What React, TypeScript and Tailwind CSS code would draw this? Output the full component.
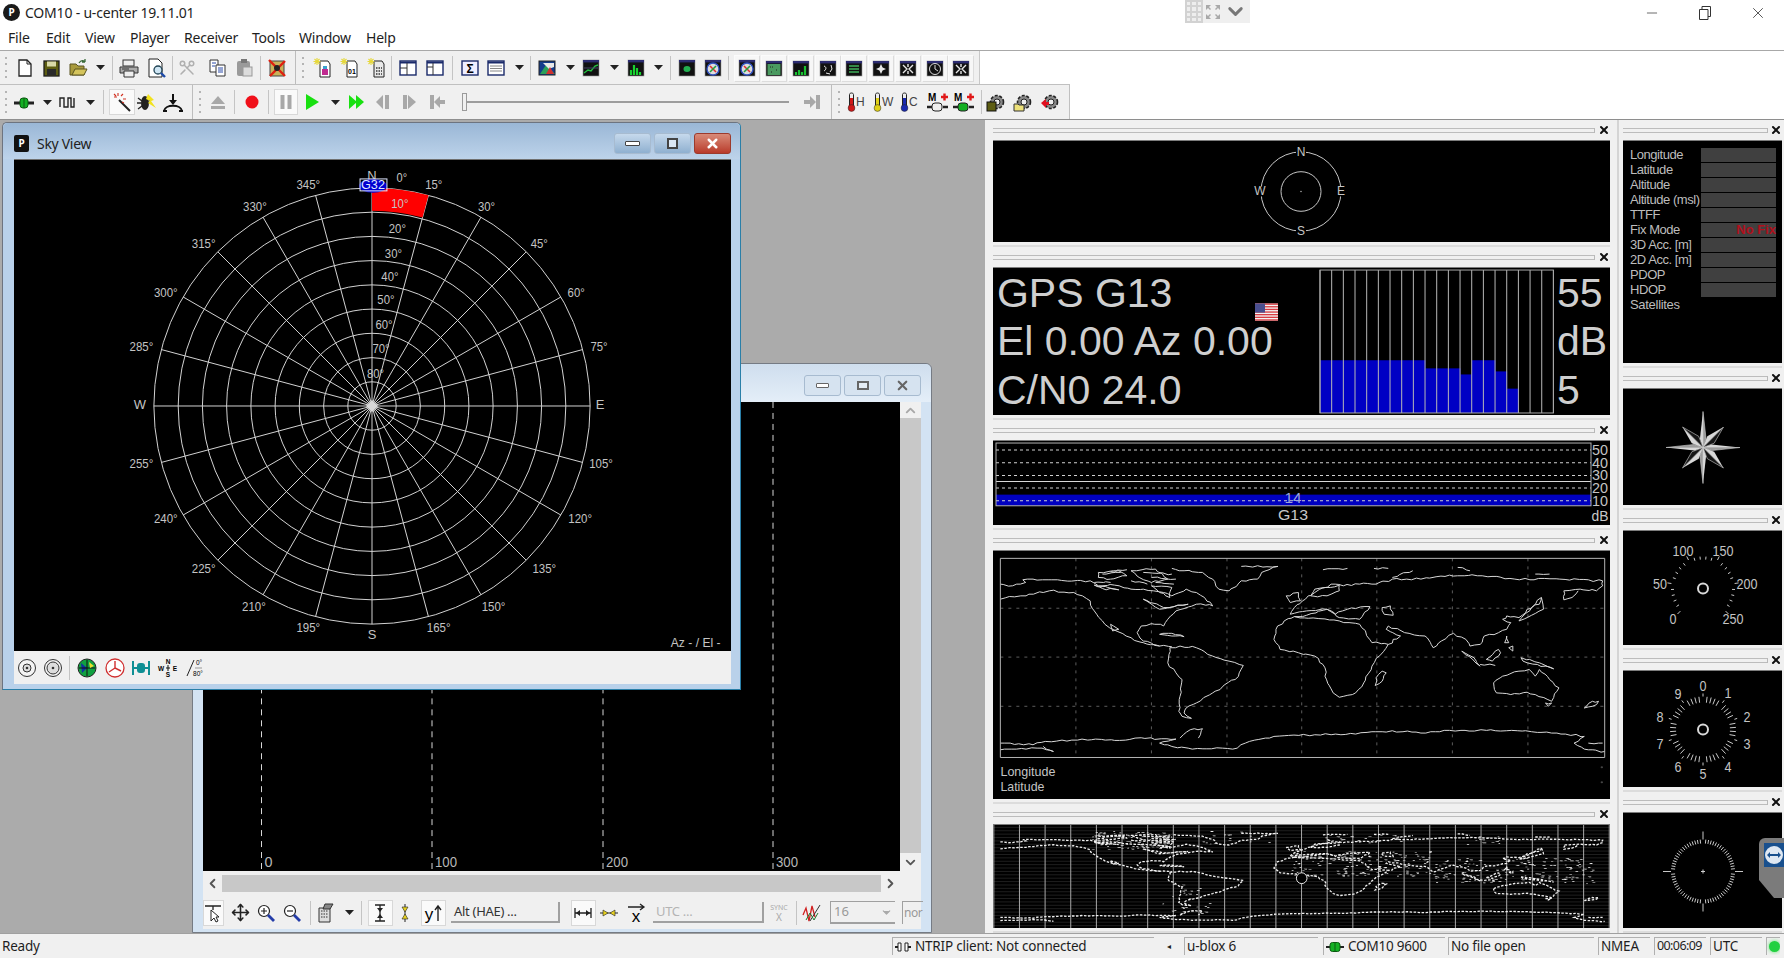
import React from 'react';
import { ChevronDown, ChevronLeft, ChevronRight, ChevronUp, Minus, Move, Scissors, X } from 'lucide-react';

const FONT = 'Liberation Sans, Arial, sans-serif';

// ---------- small helpers ----------
const polar = (cx: number, cy: number, r: number, deg: number) => {
    const a = (deg * Math.PI) / 180;
    return [cx + r * Math.sin(a), cy - r * Math.cos(a)];
};

const ticks = (cx: number, cy: number, n: number, r1: number, r2: number, every: number, r3: number, start = 0, sweep = 360) => {
    let d = '';
    const steps = sweep === 360 ? n : n + 1;
    for (let i = 0; i < steps; i++) {
        const deg = start + (sweep * i) / n;
        const [x1, y1] = polar(cx, cy, i % every === 0 ? r3 : r1, deg);
        const [x2, y2] = polar(cx, cy, r2, deg);
        d += `M${x1.toFixed(1)} ${y1.toFixed(1)}L${x2.toFixed(1)} ${y2.toFixed(1)}`;
    }
    return d;
};

let seed = 1234;
const rnd = () => {
    seed = (seed * 16807) % 2147483647;
    return seed / 2147483647;
};
const specks = (n: number, x0: number, y0: number, x1: number, y1: number) => {
    let d = '';
    for (let i = 0; i < n; i++) {
        const x = x0 + rnd() * (x1 - x0);
        const y = y0 + rnd() * (y1 - y0);
        d += `M${x.toFixed(0)} ${y.toFixed(0)}h${(3 + rnd() * 7).toFixed(0)}v2h-5z`;
    }
    return d;
};

// breaks a straight traced coast into short jittered steps, like the low-res map in the app
const rough = (d: string, amp = 3) => {
    let out = '';
    let px = 0;
    let py = 0;
    let sx = 0;
    let sy = 0;
    const walk = (x: number, y: number) => {
        const n = Math.max(1, Math.ceil(Math.hypot(x - px, y - py) / 13));
        for (let i = 1; i < n; i++) {
            const t = i / n;
            out += `L${(px + (x - px) * t + (rnd() - 0.5) * amp * 2).toFixed(0)} ${(py + (y - py) * t + (rnd() - 0.5) * amp * 2).toFixed(0)}`;
        }
        out += `L${x} ${y}`;
        px = x;
        py = y;
    };
    for (const m of d.matchAll(/([MLZ])([^MLZ]*)/g)) {
        const [x, y] = m[2].trim().split(/\s+/).map(Number);
        if (m[1] === 'M') {
            out += `M${x} ${y}`;
            px = sx = x;
            py = sy = y;
        } else if (m[1] === 'L') {
            walk(x, y);
        } else {
            walk(sx, sy);
        }
    }
    return out;
};

const Label = ({ x, y, children, size = 13, fill = '#c4c4c4', anchor = 'middle', len }: { x: number; y: number; children: React.ReactNode; size?: number; fill?: string; anchor?: 'middle' | 'start' | 'end'; len?: number }) => (
    <text x={x} y={y} fontSize={size} fill={fill} textAnchor={anchor} dominantBaseline="central" fontFamily={FONT} textLength={len} lengthAdjust={len ? 'spacingAndGlyphs' : undefined}>
        {children}
    </text>
);

// ---------- toolbar icons ----------
const Ic = ({ children, w = 20, h = 20 }: { children: React.ReactNode; w?: number; h?: number }) => (
    <svg width={w} height={h} viewBox={`0 0 ${w} ${h}`} className="block flex-none overflow-visible">
        {children}
    </svg>
);

const NewDoc = () => <Ic><path d="M4 2h8l4 4v12H4z" fill="#fff" stroke="#222" strokeWidth="1.3" /><path d="M12 2v4h4" fill="none" stroke="#222" /></Ic>;
const Save = () => <Ic><rect x="3" y="3" width="15" height="15" fill="#5d5d12" stroke="#1d1d1d" strokeWidth="1.3" /><rect x="6" y="3.5" width="9" height="5" fill="#d9d9a8" /><rect x="6" y="11" width="9" height="6.5" fill="#2a2a2a" /></Ic>;
const OpenFolder = () => <Ic><path d="M2 6h6l2 2h6v9H2z" fill="#a89a3c" stroke="#5a5520" /><path d="M4 17l3-6h12l-3 6z" fill="#d4c45c" stroke="#5a5520" /><path d="M11 5c2-3 5-3 6-1m0 0v-3m0 3h-3" fill="none" stroke="#3a6a3a" strokeWidth="1.3" /></Ic>;
const Printer = () => <Ic w={22}><rect x="5" y="2" width="11" height="6" fill="#eee" stroke="#333" /><path d="M2 9h18v6H2z" fill="#aaa" stroke="#333" /><path d="M6 13h10v6H6z" fill="#eee" stroke="#333" /><path d="M4 11h7" stroke="#333" /></Ic>;
const Preview = () => <Ic><path d="M3 1h9l4 4v14H3z" fill="#fff" stroke="#222" /><circle cx="12" cy="12" r="4" fill="#cfe6f4" stroke="#245" strokeWidth="1.3" /><path d="M15 15l4 4" stroke="#1c4aa8" strokeWidth="2.4" /></Ic>;
const Copy = () => <Ic><path d="M3 2h8v12H3z" fill="#fff" stroke="#333" /><path d="M9 7h9v11H9z" fill="#fff" stroke="#333" /><path d="M5 5h4M5 8h3M11 10h5M11 12h5M11 14h5" stroke="#2a4aa8" /></Ic>;
const Paste = () => <Ic><rect x="3" y="3" width="13" height="15" rx="2" fill="#9a9a9a" /><rect x="7" y="1" width="6" height="4" fill="#777" /><rect x="9" y="9" width="9" height="9" fill="#dcdcdc" stroke="#999" /></Ic>;
const Delete = () => <Ic><path d="M3 3h14v15H3z" fill="#c8b25a" stroke="#444" /><path d="M2 2l16 16M18 3L3 18" stroke="#e02010" strokeWidth="2.4" /><circle cx="10" cy="10" r="3" fill="#222" /></Ic>;
const SparkDoc = ({ kind }: { kind: number }) => (
    <Ic>
        <path d="M7 3h8l2 3v13H7z" fill={kind === 2 ? '#e8e8e8' : '#fff'} stroke="#222" />
        <path d="M4 0v7M0.5 3.5h7M1.5 1l5 5M6.5 1l-5 5" stroke="#e6d83c" strokeWidth="1.1" />
        {kind === 0 && <><rect x="9" y="11" width="6" height="6" fill="#c02a90" /><rect x="10" y="8" width="4" height="3" fill="#3aa0d0" /></>}
        {kind === 1 && <text x="12" y="15.5" fontSize="7" fontWeight="700" textAnchor="middle" fontFamily={FONT}>01</text>}
        {kind === 2 && <path d="M9 10h6M9 13h6M9 16h6" stroke="#333" strokeDasharray="1.5 1" strokeWidth="1.4" />}
    </Ic>
);
const Layout = ({ right }: { right?: boolean }) => <Ic><rect x="2" y="3" width="16" height="14" fill="#fff" stroke="#1a2a6a" strokeWidth="1.4" /><path d="M2 4.5h16" stroke="#1a2a6a" strokeWidth="2" /><path d={right ? 'M8 5v12M2 9h6' : 'M9 5v12M2 10h7'} stroke="#333" /></Ic>;
const SigmaIcon = () => <Ic><rect x="2" y="3" width="16" height="14" fill="#eef" stroke="#1a2a6a" strokeWidth="1.4" /><text x="10" y="14.5" fontSize="12" fontWeight="700" textAnchor="middle" fontFamily={FONT}>Σ</text></Ic>;
const TableIcon = () => <Ic><rect x="2" y="3" width="16" height="14" fill="#fff" stroke="#1a2a6a" strokeWidth="1.4" /><path d="M2 4.5h16" stroke="#1a2a6a" strokeWidth="2" /><path d="M4 8h12M4 10.5h12M4 13h12" stroke="#888" /></Ic>;
const Multi = () => <Ic><rect x="2" y="3" width="16" height="14" fill="#143c8c" stroke="#222" /><path d="M3 16l6-9 9 9z" fill="#2aa05a" /><path d="M6 5l6 6 5-2v-4z" fill="#e8e8e8" /><path d="M9 16l4-7 4 7z" fill="#d03030" /></Ic>;

const Win = ({ children, bare }: { children?: React.ReactNode; bare?: boolean }) => (
    <Ic>
        <rect x="2" y={bare ? 3 : 2} width="16" height={bare ? 15 : 16} fill="#111" stroke="#9a9a9a" strokeWidth="0.6" />
        <rect x="2" y={bare ? 3 : 2} width="16" height="2.4" fill="#2c2c70" />
        {children}
    </Ic>
);
const WinLine = () => <Win><path d="M3 15l4-3 3 1 4-5 3-1" fill="none" stroke="#22c040" strokeWidth="1.4" /><path d="M3 10h14" stroke="#446" /></Win>;
const WinBars = () => <Win><path d="M5 17v-5M8 17V7M11 17v-7M14 17v-3" stroke="#19d030" strokeWidth="2.2" /></Win>;
const WinBlob = () => <Win><ellipse cx="10" cy="11" rx="3.5" ry="3" fill="#22b050" /></Win>;
const WinSky = () => <Win><circle cx="10" cy="11" r="6" fill="#ddd" stroke="#3050c0" strokeWidth="1.4" /><path d="M7 8l6 6" stroke="#e03030" strokeWidth="1.6" /><path d="M13 8l-6 6" stroke="#20a040" strokeWidth="1.6" /></Win>;
const WinMap = () => <Win bare><rect x="3.5" y="6" width="13" height="11" fill="#4a9a60" /><path d="M6 9h3M12 12h2M7 14h2" stroke="#222" strokeDasharray="1 1" /></Win>;
const WinSig = () => <Win bare><path d="M5 17v-3M8 17v-5M11 17v-3M14 17V8" stroke="#18c030" strokeWidth="2.2" /></Win>;
const WinText = () => <Win bare><path d="M5 8h10M5 11h10M5 14h10" stroke="#3fae5a" strokeWidth="1.6" /></Win>;
const WinCompass = () => <Win bare><path d="M10 6l1.6 3.4L15 11l-3.4 1.6L10 16l-1.6-3.4L5 11l3.4-1.6z" fill="#e8e8e8" /></Win>;
const WinCross = () => <Win bare><path d="M5 7l4 4-4 4M15 7l-4 4 4 4M10 6v3M10 13v3" fill="none" stroke="#e8e8e8" strokeWidth="1.4" /></Win>;
const WinClock = () => <Win bare><circle cx="10" cy="11" r="5.5" fill="none" stroke="#ddd" /><path d="M10 11V7M10 11l3 2" stroke="#ddd" /></Win>;
const WinWorld = () => <Win bare><path d="M6 8c3 1 2 4 0 5M13 7l1 4-2 3M8 15l4 1" fill="none" stroke="#eee" /></Win>;

const Drop = () => <svg width="9" height="5" viewBox="0 0 9 5" className="block flex-none"><path d="M0 0h9L4.5 5z" fill="#222" /></svg>;
const Connector = ({ fill = '#14b024' }: { fill?: string }) => <Ic w={22}><path d="M1 11h6M15 11h6" stroke="#222" strokeWidth="3" /><rect x="7" y="6" width="8" height="10" rx="3" fill={fill} stroke="#0a5a10" /><path d="M11 6v10" stroke="#0a5a10" /></Ic>;
const Pulse = () => <Ic w={18}><path d="M1 15V6h4v9h4V6h3v9h3V6" fill="none" stroke="#222" strokeWidth="1.4" /></Ic>;
const Wand = () => <Ic><path d="M7 8l11 11" stroke="#222" strokeWidth="2" /><path d="M6 1v3M2 5h3M9 4l2-2M2 2l2 2M11 7h3M12 11l-2-1" stroke="#d03020" strokeWidth="1.1" /></Ic>;
const Bug = () => <Ic w={22}><ellipse cx="9" cy="11" rx="4" ry="7" fill="#222" /><path d="M2 6l4 3M1 11h4M2 17l4-3M16 7l-3 2" stroke="#222" strokeWidth="1.3" /><path d="M12 2l6 6-3 1 5 7-8-5 2-2-4-2z" fill="#f2e21e" /></Ic>;
const Dish = () => <Ic w={22}><path d="M2 19c1-7 17-7 18 0" fill="none" stroke="#111" strokeWidth="2" /><path d="M1 19h4M17 19h4" stroke="#111" strokeWidth="2" /><path d="M11 2v9" stroke="#111" strokeWidth="2" /><path d="M7 8l4 5 4-5z" fill="#111" /></Ic>;
const Eject = () => <Ic><path d="M10 4l7 8H3z" fill="#a8a8a8" /><rect x="3" y="14" width="14" height="3" fill="#a8a8a8" /></Ic>;
const Record = () => <Ic><circle cx="10" cy="10" r="6.5" fill="#f0101a" /></Ic>;
const Pause = () => <Ic><rect x="4.5" y="3" width="4" height="14" fill="#a8a8a8" /><rect x="11.5" y="3" width="4" height="14" fill="#a8a8a8" /></Ic>;
const Play = () => <Ic><path d="M4 2l13 8-13 8z" fill="#18e010" /></Ic>;
const Fast = () => <Ic><path d="M3 3l8 7-8 7z" fill="#18e010" /><path d="M10 3l8 7-8 7z" fill="#18e010" /></Ic>;
const Prev = () => <Ic><path d="M10 3v14L3 10z" fill="#a8a8a8" /><rect x="12" y="3" width="4" height="14" fill="#a8a8a8" /></Ic>;
const Next = () => <Ic><path d="M9 3v14l8-7z" fill="#a8a8a8" /><rect x="4" y="3" width="4" height="14" fill="#a8a8a8" /></Ic>;
const SkipStart = () => <Ic><rect x="3" y="3" width="4" height="14" fill="#a8a8a8" /><path d="M13 4v12l-6-6z" fill="#a8a8a8" /><rect x="12" y="8" width="6" height="4" fill="#a8a8a8" /></Ic>;
const SkipEnd = () => <Ic><rect x="14" y="3" width="4" height="14" fill="#a8a8a8" /><path d="M8 4v12l6-6z" fill="#a8a8a8" /><rect x="2" y="8" width="7" height="4" fill="#a8a8a8" /></Ic>;
const Thermo = ({ color, letter }: { color: string; letter: string }) => (
    <Ic w={24}>
        <path d="M2.500 2.500c0-2 4-2 4 0V14h-4z" fill="#eee" stroke="#222" />
        <rect x="3" y="6" width="3" height="9" fill={color} />
        <circle cx="4.500" cy="16" r="3.400" fill={color} stroke="#222" strokeWidth=".5" />
        <text x="9" y="14" fontSize="12" fill="#444" fontFamily={FONT}>{letter}</text>
    </Ic>
);
const MPlus = ({ live }: { live?: boolean }) => (
    <Ic w={24}>
        <text x="2" y="9" fontSize="10" fontWeight="700" fontFamily={FONT}>M</text>
        <path d="M15 5h7M18.500 1.500v7" stroke="#e01818" strokeWidth="2.4" />
        <path d="M1 15h5M17 15h5" stroke="#222" strokeWidth="2.500" />
        <rect x="6" y="11" width="10" height="8" rx="3" fill={live ? '#14b024' : '#eee'} stroke="#222" />
    </Ic>
);
const Gear = ({ badge }: { badge: 'save' | 'open' | 'back' }) => (
    <Ic w={22}>
        <circle cx="11" cy="10" r="6.500" fill="#888" stroke="#222" strokeWidth="1.600" strokeDasharray="3 1.600" />
        <circle cx="11" cy="10" r="3" fill="#eee" stroke="#222" />
        {badge === 'save' && <rect x="1" y="10" width="9" height="9" fill="#5d5d12" stroke="#111" />}
        {badge === 'open' && <path d="M1 12h4l1 1h5v6H1z" fill="#eee27a" stroke="#333" />}
        {badge === 'back' && <path d="M1 11l5-4v3h3v3H6v3z" fill="#e01020" />}
    </Ic>
);

const Dial = ({ alt }: { alt?: boolean }) => <Ic><circle cx="10" cy="10" r="8.500" fill="#f4f4f4" stroke="#333" /><circle cx="10" cy="10" r={alt ? 6 : 4} fill="#ddd" stroke="#333" /><circle cx="10" cy="10" r="1.300" fill="#333" /></Ic>;
const Globe = () => <Ic><circle cx="10" cy="10" r="9" fill="#10a040" stroke="#222" /><path d="M4 5l6 5-5 5z" fill="#1030a0" /><path d="M2 10h16M10 2v16" stroke="#111" /><path d="M12 4l5 4-4 2z" fill="#e8e030" /></Ic>;
const RedDial = () => <Ic><circle cx="10" cy="10" r="9" fill="#fff" stroke="#d03030" strokeWidth="1.300" /><path d="M10 3v7l6 3M10 10l-6 4" fill="none" stroke="#d03030" strokeWidth="1.400" /></Ic>;
const TealIc = () => <Ic><rect x="6" y="5" width="8" height="10" rx="3" fill="#0f8f94" /><path d="M2 3v14M18 3v14M2 10h16" stroke="#0f8f94" strokeWidth="2" /></Ic>;
const Nsew = () => (
    <Ic>
        <text x="10" y="6" fontSize="6.500" fontWeight="700" textAnchor="middle" fontFamily={FONT}>N</text>
        <text x="10" y="19" fontSize="6.500" fontWeight="700" textAnchor="middle" fontFamily={FONT}>S</text>
        <text x="3" y="13" fontSize="6.500" fontWeight="700" textAnchor="middle" fontFamily={FONT}>W</text>
        <text x="17" y="13" fontSize="6.500" fontWeight="700" textAnchor="middle" fontFamily={FONT}>E</text>
        <path d="M10 7v6" stroke="#111" /><path d="M8 10h4" stroke="#111" />
    </Ic>
);
const Elev = () => (
    <Ic>
        <path d="M2 18L9 2" stroke="#222" />
        <text x="14" y="7" fontSize="6.500" textAnchor="middle" fontFamily={FONT}>0°</text>
        <path d="M10 10h7" stroke="#999" />
        <text x="13" y="18" fontSize="6.500" textAnchor="middle" fontFamily={FONT}>80°</text>
    </Ic>
);

// window toolbar
const CursorLine = () => <Ic><path d="M2 3h16M10 3v4" stroke="#222" strokeWidth="1.300" /><path d="M8 7v11l3-3 2 4 2-1-2-4h3z" fill="#fff" stroke="#222" /></Ic>;
const Mag = ({ plus }: { plus?: boolean }) => <Ic><circle cx="8" cy="8" r="5.500" fill="#fff" stroke="#222" strokeWidth="1.200" /><path d={plus ? 'M5 8h6M8 5v6' : 'M5 8h6'} stroke="#222" strokeWidth="1.200" /><path d="M12 12l6 6" stroke="#243ca8" strokeWidth="2.800" /></Ic>;
const Clipboard = () => <Ic><path d="M3 5h11v14H3z" fill="#ddd" stroke="#333" /><path d="M5 8h7M5 11h7M5 14h7" stroke="#333" strokeDasharray="1.500 1" /><path d="M9 1h8l-3 5H7z" fill="#888" stroke="#333" /></Ic>;
const IBeam = () => <Ic><path d="M5 2h10M5 18h10M10 2v16" stroke="#222" strokeWidth="1.300" /><path d="M7 5h6l-3 4zM7 15h6l-3-4z" fill="#222" /></Ic>;
const Squeeze = () => <Ic><path d="M10 1v18" stroke="#222" /><path d="M7 4h6l-3 5zM7 16h6l-3-5z" fill="#e6d020" stroke="#222" strokeWidth=".6" /></Ic>;
const YUp = () => <Ic w={22}><text x="7" y="17" fontSize="17" fontFamily={FONT} textAnchor="middle">y</text><path d="M16 18V4M13 7l3-4 3 4" fill="none" stroke="#222" strokeWidth="1.400" /></Ic>;
const HSpan = () => <Ic><path d="M2 5v10M18 5v10M2 10h16" stroke="#222" strokeWidth="1.300" /><path d="M3 10l4-3v6zM17 10l-4-3v6z" fill="#222" /></Ic>;
const HSqueeze = () => <Ic><path d="M1 10h18" stroke="#222" /><path d="M4 7v6l5-3zM16 7v6l-5-3z" fill="#e6d020" stroke="#222" strokeWidth=".6" /></Ic>;
const XArrow = () => <Ic><text x="10" y="19" fontSize="17" textAnchor="middle" fontFamily={FONT}>x</text><path d="M2 4h15M14 1l4 3-4 3" fill="none" stroke="#222" strokeWidth="1.300" /></Ic>;
const Wave = () => <Ic><path d="M1 12l3-7 3 13 3-15 3 11" fill="none" stroke="#d02020" strokeWidth="1.300" /><path d="M8 18L18 2" stroke="#333" /><path d="M4 17l4-7 4 7 4-7" fill="none" stroke="#208030" /></Ic>;

// ---------- toolbar layout ----------
const T = ({ className = 'w-[26px]', children }: { className?: string; children?: React.ReactNode }) => (
    <div className={`flex h-full flex-none items-center justify-center ${className}`}>{children}</div>
);
const Sep = ({ className = 'w-[4px]' }: { className?: string }) => (
    <div className={`flex h-full flex-none items-center justify-center ${className}`}><div className="h-[24px] w-px bg-[#c4c4c4]" /></div>
);
const Grip = () => (
    <div className="flex h-[22px] w-[2px] flex-none flex-col justify-between">
        {[0, 1, 2, 3].map(i => <div key={i} className="h-[2px] w-[2px] bg-[#b4b4b4]" />)}
    </div>
);
const Boxed = ({ children }: { children: React.ReactNode }) => (
    <T className="w-[26.75px]"><div className="flex h-[26px] w-[25px] items-center justify-center border-t border-l border-[#fbfbfb] bg-[#f7f7f7] shadow-[1px_1px_0_#dcdcdc]">{children}</div></T>
);
const Pressed = ({ children, className = 'w-[24px]' }: { children: React.ReactNode; className?: string }) => (
    <div className={`flex h-[26px] flex-none items-center justify-center border border-[#d8d8d8] bg-[#fafafa] ${className}`}>{children}</div>
);

const TopToolbar = () => (
    <div className="flex h-[33px] w-[980px] items-center border-r border-[#c8c8c8] bg-[#f0f0f0]">
        <T className="w-[12px]"><Grip /></T>
        <T><NewDoc /></T><T><Save /></T><T className="w-[28px]"><OpenFolder /></T><T className="w-[16px]"><Drop /></T><Sep className="w-[8px]" />
        <T><Printer /></T><T className="w-[28px]"><Preview /></T><Sep />
        <T><Scissors size={18} color="#b0b0b0" className="rotate-90" /></T><T className="w-[34px]"><Copy /></T><T className="w-[20px]"><Paste /></T><Sep className="w-[12px]" /><T className="w-[22px]"><Delete /></T>
        <div className="flex h-full w-[22px] flex-none items-center gap-[6px] pl-[7px]"><div className="h-full w-px bg-[#bdbdbd]" /><Grip /></div>
        <T><SparkDoc kind={0} /></T><T className="w-[28px]"><SparkDoc kind={1} /></T><T><SparkDoc kind={2} /></T><Sep className="w-[2px]" />
        <T className="w-[32px]"><Layout /></T><T className="w-[22px]"><Layout right /></T><Sep className="w-[12px]" />
        <T className="w-[24px]"><SigmaIcon /></T><T className="w-[28px]"><TableIcon /></T><T className="w-[18px]"><Drop /></T><Sep />
        <T className="w-[30px]"><Multi /></T><T className="w-[16px]"><Drop /></T><T><WinLine /></T><T className="w-[20px]"><Drop /></T>
        <T className="w-[24px]"><WinBars /></T><T className="w-[20px]"><Drop /></T><Sep />
        <T className="w-[30px]"><WinBlob /></T><T className="w-[22px]"><WinSky /></T><Sep className="w-[9.5px]" />
        <Boxed><WinSky /></Boxed><Boxed><WinMap /></Boxed><Boxed><WinSig /></Boxed><Boxed><WinWorld /></Boxed><Boxed><WinText /></Boxed>
        <Boxed><WinCompass /></Boxed><Boxed><WinCross /></Boxed><Boxed><WinClock /></Boxed><Boxed><WinCross /></Boxed>
    </div>
);

const BottomToolbar = () => (
    <div className="flex h-[35px] w-[1070px] items-center border-t border-r border-[#c0c0c0] bg-[#f0f0f0]">
        <T className="w-[12px]"><Grip /></T>
        <T className="w-[24px]"><Connector /></T><T className="w-[22px]"><Drop /></T><T className="w-[20px]"><Pulse /></T><T className="w-[24px]"><Drop /></T><Sep className="w-[2px]" />
        <T className="w-[36px]"><Pressed className="w-[26px]"><Wand /></Pressed></T><T className="w-[14px]"><Bug /></T><T className="w-[38px]"><Dish /></T>
        <div className="flex h-full w-[14px] flex-none items-center gap-[6px]"><div className="h-full w-px bg-[#bdbdbd]" /><Grip /></div>
        <T className="w-[24px]"><Eject /></T><Sep className="w-[8px]" /><T className="w-[28px]"><Record /></T><Sep />
        <T className="w-[32px]"><Pressed><Pause /></Pressed></T><T className="w-[20px]"><Play /></T><T className="w-[26px]"><Drop /></T><T className="w-[16px]"><Fast /></T>
        <T className="w-[38px]"><Prev /></T><T className="w-[14px]"><Next /></T><T className="w-[42px]"><SkipStart /></T>
        <div className="relative flex h-full w-[342px] flex-none items-center pr-[11px] pl-[6px]">
            <div className="h-[2px] flex-1 bg-[#9c9c9c]" />
            <div className="absolute top-[8px] left-[4px] h-[18px] w-[5px] border border-[#9a9a9a] bg-[#f0f0f0]" />
        </div>
        <T className="w-[24px]"><SkipEnd /></T>
        <div className="flex h-full w-[22px] flex-none items-center gap-[6px] pl-[7px]"><div className="h-full w-px bg-[#bdbdbd]" /><Grip /></div>
        <T className="w-[24px]"><div className="pl-[2px]"><Thermo color="#d01818" letter="H" /></div></T>
        <T className="w-[27px]"><div className="pl-[2px]"><Thermo color="#e0d018" letter="W" /></div></T>
        <T className="w-[28px]"><div className="pl-[2px]"><Thermo color="#1a2ab0" letter="C" /></div></T>
        <T className="w-[25px]"><MPlus /></T><T className="w-[28px]"><MPlus live /></T><Sep className="w-[6px]" />
        <T><Gear badge="save" /></T><T className="w-[28px]"><Gear badge="open" /></T><T><Gear badge="back" /></T>
    </div>
);

// ---------- MDI windows ----------
const CapBtn = ({ children, className, active }: { children: React.ReactNode; className: string; active?: boolean }) => (
    <div className={`flex h-[21px] w-[37px] items-center justify-center rounded-[3px] border ${active ? 'border-[#7f9db9]' : 'border-[#a7bbd0]'} ${className}`}>{children}</div>
);

const Sky = () => {
    const cx = 372;
    const cy = 406;
    const rings = [24.3, 48.6, 73, 97.3, 121.6, 146, 170.3, 194.6, 219];
    const spokes = Array.from({ length: 24 }, (_, i) => i * 15);
    const [ax, ay] = polar(cx, cy, 219, 15);
    const [bx, by] = polar(cx, cy, 196, 15);
    const outerLabels: [string, number, number][] = [
        ['0°', 402, 177], ['15°', 434, 184], ['30°', 487, 206], ['45°', 540, 242.5], ['60°', 577, 292.5], ['75°', 600, 346],
        ['E', 601, 405], ['105°', 602, 463.5], ['120°', 581, 519], ['135°', 545, 569], ['150°', 494, 607], ['165°', 439, 628],
        ['S', 372, 635], ['195°', 308, 628], ['210°', 253.5, 607], ['225°', 203, 569], ['240°', 165, 518.5], ['255°', 140.5, 463.5],
        ['W', 139, 405], ['285°', 140.5, 346], ['300°', 165, 292], ['315°', 203, 242.5], ['330°', 254.5, 206], ['345°', 308, 184], ['N', 372, 175],
        ['10°', 400, 203], ['20°', 397.5, 227.5], ['30°', 393.5, 252.5], ['40°', 390, 276], ['50°', 386, 299.5], ['60°', 384, 324], ['70°', 381, 348], ['80°', 375.5, 373],
    ];
    return (
        <svg viewBox="14 159 717 493" className="block h-full w-full">
            {rings.map(r => <circle key={r} cx={cx} cy={cy} r={r} fill="none" stroke="#d4d4d4" strokeWidth="1" />)}
            {spokes.map(a => {
                const [x, y] = polar(cx, cy, 219, a);
                return <line key={a} x1={cx} y1={cy} x2={x} y2={y} stroke="#d4d4d4" strokeWidth="1" />;
            })}
            <path d={`M${cx} 187A219 219 0 0 1 ${ax} ${ay}L${bx} ${by}A196 196 0 0 0 ${cx} 210z`} fill="#ff0000" />
            <path d="M366 406l6-6 6 6-6 6z" fill="#d8d8d8" />
            {outerLabels.map(([t, x, y], i) => <Label key={i} x={x} y={y} len={t.length > 1 ? (t.length - 1) * 6.600 + 4 : undefined}>{t}</Label>)}
            <ellipse cx="373" cy="185" rx="14" ry="7" fill="#0000d0" />
            <rect x="360" y="178" width="27" height="12" fill="none" stroke="#dfe6ff" />
            <Label x={373} y={184} size={12} fill="#dfe6ff" len={24}>G32</Label>
            <Label x={722} y={643} anchor="end" len={50}>Az - / El -</Label>
        </svg>
    );
};

const SkyWindow = () => (
    <div className="absolute top-[2px] left-[2px] flex h-[568px] w-[739px] flex-col rounded-t-[5px] border border-[#6d7480] border-r-[#2a7fa8] border-b-[#2a7fa8] bg-[#b9d1ea]">
        <div className="flex h-[36px] flex-none items-center rounded-t-[5px] bg-gradient-to-b from-[#9ab7d6] to-[#bdd3ea] pt-[4px] pr-[9px] pl-[11px]">
            <div className="flex h-[17px] w-[15px] items-center justify-center rounded-[2px] bg-[#111] text-[10px] font-bold text-white">P</div>
            <span className="ml-[8px] flex-1 text-[14px] tracking-[-0.3px] text-[#222]">Sky View</span>
            <div className="flex gap-[3px]">
                <CapBtn className="bg-gradient-to-b from-[#c6d9ec] to-[#8fb0d0]"><div className="h-[5px] w-[15px] rounded-[1px] border border-[#444] bg-white" /></CapBtn>
                <CapBtn className="bg-gradient-to-b from-[#c6d9ec] to-[#8fb0d0]"><div className="h-[11px] w-[11px] border-2 border-[#444] bg-[#dce8f4]" /></CapBtn>
                <CapBtn active className="border-[#9c3a2c] bg-gradient-to-b from-[#d88a78] to-[#b8392a]"><X size={15} color="#fff" strokeWidth={4} /></CapBtn>
            </div>
        </div>
        <div className="mr-[9px] ml-[11px] flex min-h-0 flex-1 flex-col pb-[5px]">
            <div className="min-h-0 flex-1 border-t border-[#707070] bg-black"><Sky /></div>
            <div className="flex h-[33px] flex-none items-center bg-[#f0f0f0]">
                <T className="w-[26px]"><Dial /></T><T className="w-[26px]"><Dial alt /></T><Sep className="w-[7px]" />
                <T className="w-[28px]"><Globe /></T><T className="w-[27px]"><RedDial /></T><T className="w-[26px]"><TealIc /></T><T className="w-[27px]"><Nsew /></T><T className="w-[27px]"><Elev /></T>
            </div>
        </div>
    </div>
);

const Combo = ({ className, text, dim }: { className: string; text: string; dim?: boolean }) => (
    <div className={`flex h-[21px] flex-none items-center border-b-2 border-r-2 border-[#a0a0a0] pl-[3px] text-[13px] tracking-[-0.3px] ${dim ? 'text-[#b4b4b4]' : 'text-[#333]'} ${className}`}>{text}</div>
);

const PlotWindow = () => {
    const xs = [261.5, 432, 603, 773];
    const labels = ['0', '100', '200', '300'];
    return (
        <div className="absolute top-[243px] left-[192px] flex h-[570px] w-[740px] flex-col rounded-t-[6px] border border-[#757b84] bg-[#d3e3f3]">
            <div className="flex h-[38px] flex-none items-start justify-end rounded-t-[6px] bg-gradient-to-b from-[#cfdeee] to-[#e4eef8] pt-[11px] pr-[10px]">
                <div className="flex gap-[3px]">
                    <CapBtn className="bg-[#d6e3f0]"><div className="h-[5px] w-[13px] rounded-[1px] border border-[#666] bg-white" /></CapBtn>
                    <CapBtn className="bg-[#d6e3f0]"><div className="h-[9px] w-[12px] border-2 border-[#666] bg-[#e4ecf4]" /></CapBtn>
                    <CapBtn className="bg-[#d6e3f0]"><X size={15} color="#666" strokeWidth={3.500} /></CapBtn>
                </div>
            </div>
            <div className="mr-[10px] ml-[10px] flex min-h-0 flex-1 flex-col pb-[3px]">
                <div className="flex min-h-0 flex-1">
                    <div className="min-w-0 flex-1 bg-black">
                        <svg viewBox="203 402 697 470" preserveAspectRatio="none" className="block h-full w-full">
                            {xs.map((x, i) => (
                                <g key={x}>
                                    <line x1={x} y1="402" x2={x} y2="872" stroke="#d8d8d8" strokeWidth="1" strokeDasharray="6 5" />
                                    <Label x={x + 3} y={863} anchor="start" size={14} fill="#b8b8b8" len={i === 0 ? 8 : 22}>{labels[i]}</Label>
                                </g>
                            ))}
                        </svg>
                    </div>
                    <div className="flex w-[21px] flex-none flex-col items-center bg-[#f0f0f0]">
                        <div className="flex h-[16px] items-center"><ChevronUp size={15} color="#a8a8a8" strokeWidth={3} /></div>
                        <div className="w-full flex-1 bg-[#c8c8c8]" />
                        <div className="flex h-[18px] items-center"><ChevronDown size={15} color="#555" strokeWidth={3} /></div>
                    </div>
                </div>
                <div className="flex h-[25px] flex-none items-center bg-[#f0f0f0] pr-[21px]">
                    <div className="flex w-[19px] justify-center"><ChevronLeft size={15} color="#555" strokeWidth={3} /></div>
                    <div className="h-[17px] flex-1 bg-[#c8c8c8]" />
                    <div className="flex w-[19px] justify-center"><ChevronRight size={15} color="#555" strokeWidth={3} /></div>
                </div>
                <div className="flex h-[33px] flex-none items-center bg-[#f0f0f0]">
                    <T className="w-[20px]"><Pressed className="w-[21px]"><CursorLine /></Pressed></T><T className="w-[34px]"><Move size={19} color="#222" /></T><T className="w-[18px]"><Mag plus /></T><T className="w-[34px]"><Mag /></T><Sep className="w-[2px]" />
                    <T className="w-[30px]"><Clipboard /></T><T className="w-[16px]"><Drop /></T><Sep className="w-[8px]" />
                    <T className="w-[30px]"><Pressed className="w-[25px]"><IBeam /></Pressed></T><T className="w-[20px]"><Squeeze /></T><T className="w-[36px]"><Pressed className="w-[25px]"><YUp /></Pressed></T>
                    <Combo className="w-[109px]" text="Alt (HAE) ..." /><div className="w-[10px] flex-none" />
                    <T><Pressed className="w-[25px]"><HSpan /></Pressed></T><T><HSqueeze /></T><T className="w-[28px]"><XArrow /></T><div className="w-[3px] flex-none" />
                    <Combo className="w-[111px]" text="UTC ..." dim />
                    <T className="w-[30px]"><div className="flex flex-col items-center text-[#aaa]"><span className="text-[7px] leading-[9px]">SYNC</span><span className="text-[10px] leading-[11px]">X</span></div></T><Sep />
                    <T className="w-[28px]"><Wave /></T><div className="w-[4px] flex-none" />
                    <div className="flex h-[23px] w-[65px] flex-none items-center justify-between border-t border-l border-b-2 border-r-0 border-[#a0a0a0] pr-[2px] pl-[3px] text-[13px] text-[#999]">16<ChevronDown size={13} color="#aaa" fill="#aaa" /></div>
                    <div className="w-[7px] flex-none" />
                    <div className="flex h-[23px] w-[21px] flex-none items-center overflow-hidden border-t border-l border-[#a0a0a0] pl-px text-[12px] tracking-[-0.5px] text-[#999]">nor</div>
                </div>
            </div>
        </div>
    );
};

// ---------- docking panes ----------
const Pane = ({ className, children, grip }: { className: string; children?: React.ReactNode; grip: string }) => (
    <div className={`flex flex-none flex-col border-b-2 border-[#dcdcdc] ${className}`}>
        <div className="flex h-[20px] flex-none items-center justify-between">
            <div className={`flex h-[5px] flex-col justify-between border-r border-[#b8b8b8] ${grip}`}>
                <div className="h-px bg-[#bcbcbc]" /><div className="h-px bg-[#bcbcbc]" />
            </div>
            <div className="flex w-[12px] justify-center"><X size={12} color="#111" strokeWidth={4} /></div>
        </div>
        <div className="mb-[3px] min-h-0 flex-1 border-t border-[#7c7c7c] bg-black">{children}</div>
    </div>
);

const CompassSmall = () => (
    <svg viewBox="993 140 617 102" preserveAspectRatio="none" className="block h-full w-full">
        <circle cx="1301" cy="191" r="40" fill="none" stroke="#c8c8c8" />
        <circle cx="1301" cy="191" r="20" fill="none" stroke="#c8c8c8" />
        <circle cx="1301" cy="191" r="0.700" fill="#c8c8c8" />
        {([['N', 1301, 151], ['S', 1301, 231], ['W', 1260, 191], ['E', 1341, 191]] as [string, number, number][]).map(([t, x, y]) => (
            <g key={t}><rect x={x - 5} y={y - 5} width="10" height="10" fill="#000" /><Label x={x} y={y} size={12}>{t}</Label></g>
        ))}
    </svg>
);

const SignalPanel = () => {
    const tops = [361, 361, 361, 361, 361, 361, 361, 361, 361, 369, 369, 369, 375, 361, 361, 372, 389];
    const x0 = 1320;
    const step = 11.67;
    return (
        <svg viewBox="993 270 617 145" preserveAspectRatio="none" className="block h-full w-full">
            {tops.map((t, i) => <rect key={i} x={x0 + i * step} y={t} width={step + 0.500} height={413 - t} fill="#0000c4" />)}
            {Array.from({ length: 21 }, (_, i) => <line key={i} x1={x0 + i * step} y1="272" x2={x0 + i * step} y2="413" stroke="#b8b8b8" />)}
            <rect x={x0} y="272" width={step * 20} height="141" fill="none" stroke="#a8a8a8" />
            <g fontFamily={FONT} fontSize="41" fill="#cfcfcf">
                <text x="997" y="308">GPS G13</text>
                <text x="997" y="356">El 0.00 Az 0.00</text>
                <text x="997" y="404">C/N0 24.0</text>
                <text x="1557" y="308">55</text>
                <text x="1557" y="356">dB</text>
                <text x="1557" y="404">5</text>
            </g>
            <rect x="1255" y="305" width="23" height="17" fill="#f4f4f4" />
            {[0, 1, 2, 3, 4, 5, 6].map(i => <rect key={i} x="1255" y={305 + i * 2.600} width="23" height="1.300" fill="#d83a40" />)}
            <rect x="1255" y="305" width="10" height="9" fill="#4a4f8f" />
        </svg>
    );
};

const LevelPanel = () => (
    <svg viewBox="993 442 617 83" preserveAspectRatio="none" className="block h-full w-full">
        <rect x="996" y="495" width="595" height="11" fill="#0000c0" />
        {[451, 463.5, 476, 488.5, 501].map(y => <line key={y} x1="996" y1={y} x2="1591" y2={y} stroke="#d0d0d0" strokeDasharray="3 3" />)}
        <line x1="996" y1="482" x2="1591" y2="482" stroke="#d8d8d8" />
        <rect x="996" y="444" width="595" height="62" fill="none" stroke="#b0b0b0" />
        {[['50', 451], ['40', 463.5], ['30', 476], ['20', 488.5], ['10', 501]].map(([t, y]) => <Label key={t} x={1600} y={Number(y)} size={14} len={16}>{t}</Label>)}
        <Label x={1293} y={498} size={15} fill="#9fa6d8" len={17}>14</Label>
        <Label x={1293} y={515} size={15} fill="#c8c8c8" len={30}>G13</Label>
        <Label x={1600} y={516} size={14} fill="#c8c8c8" len={17}>dB</Label>
    </svg>
);

// coastlines, traced in the coordinates of the crop so they share one viewBox with both maps
const COAST = [
    'M50 165L80 170L112 160L105 152L130 150L190 152L215 156L270 155L290 170L330 168L370 180L400 180L450 190L470 200L505 180L530 190L550 205L570 230L530 225L480 245L460 270L450 290L420 283L395 290L385 310L400 335L440 350L470 352',
    'M50 210L100 200L120 195L170 185L230 190L270 215L280 245L300 275L325 300L370 325L400 340L440 350',
    'M640 112L730 112L690 130L680 150L640 155L610 185L585 180L570 150L545 130L500 125L470 118',
    'M290 130L340 125L360 140L320 150L290 145ZM370 125L430 120L460 150L420 160L390 145ZM280 168L340 182L300 178ZM420 170L470 175L465 205L440 190Z',
    'M300 135L345 130M320 128L360 122M400 130L470 135M420 145L480 150M430 160L475 165M280 160L320 160M370 155L410 165',
    'M440 315L470 312L500 322L470 320ZM320 285L340 300L325 305ZM400 210L440 240L510 225L450 235Z',
    'M465 355L490 350L530 355L570 380L610 395L645 408L625 450L600 465L570 490L530 520L505 535L500 550L518 566L495 560L487 545L490 500L495 450L480 430L460 400Z',
    'M770 262L745 275L725 300L720 330L735 360L780 370L820 380L845 415L845 440L865 490L880 503L920 490L940 460L960 410L1000 345L960 340L930 285L880 275L830 268Z',
    'M985 425L995 430L985 455L968 468L970 445Z',
    'M760 255L770 235L790 215L820 190L860 165L890 170L930 165L970 165L1010 150L1080 150L1150 138L1230 140L1310 150L1420 150L1525 155L1525 170L1510 185L1470 180L1430 185L1430 212L1450 205L1465 185',
    'M1375 205L1370 225L1340 240L1320 265L1290 260L1280 270L1300 280L1290 300L1270 310L1235 320L1225 345L1200 350L1190 330L1160 312L1130 335L1110 355L1090 320L1040 310L1000 290L995 300L1030 320L1000 345',
    'M770 262L800 258L850 240L880 265L930 270L955 232L900 240L870 255L850 240L800 245L760 255',
    'M985 235L1005 230L1012 258L990 255ZM750 200L780 190L785 215L760 220ZM810 200L820 180L880 168L880 185L850 200Z',
    'M840 122L900 118M965 118L1000 118M1010 145L1060 125M1170 115L1200 125M1360 135L1395 135',
    'M1375 205L1380 240L1340 265L1320 275ZM1180 365L1210 385L1225 410ZM1240 390L1270 360L1275 370L1255 395ZM1290 320L1295 340L1285 340ZM1295 355L1305 350L1305 365ZM1225 405L1262 408',
    'M1325 385L1370 400L1405 418L1365 405L1330 395Z',
    'M1258 460L1280 440L1320 425L1345 420L1360 440L1370 420L1395 450L1418 475L1400 515L1340 488L1300 495L1265 490Z',
    'M1385 520L1400 520L1392 530ZM1480 535L1500 515L1515 515L1500 530Z',
    'M50 640L130 645L160 635L250 628L330 632L380 625L480 628L440 640L470 650L520 658L630 655L650 640L720 620L820 615L920 613L1010 603L1080 610L1150 602L1290 603L1400 610L1480 620L1455 640L1490 660L1530 665',
    'M50 660L140 655L180 665L155 650M1490 640L1525 640M490 625L515 600L545 597L535 625',
].map(d => rough(d));

const WorldPanel = () => (
    <svg viewBox="32 66 1511 741" preserveAspectRatio="none" className="block h-full w-full">
        {[235, 420, 605, 788, 972, 1157, 1342].map(x => <line key={x} x1={x} y1="88" x2={x} y2="683" stroke="#5c5c5c" strokeDasharray="3 5" vectorEffect="non-scaling-stroke" />)}
        {[237, 383, 530].map(y => <line key={y} x1="50" y1={y} x2="1530" y2={y} stroke="#5c5c5c" strokeDasharray="3 5" vectorEffect="non-scaling-stroke" />)}
        {COAST.map((d, i) => <path key={i} d={d} fill="none" stroke="#d8d8d8" strokeWidth="1" vectorEffect="non-scaling-stroke" />)}
        <rect x="50" y="88" width="1480" height="595" fill="none" stroke="#b4b4b4" vectorEffect="non-scaling-stroke" />
        <g transform="scale(2.449 3)">
            <Label x={20.500} y={242} anchor="start" size={13} len={55}>Longitude</Label>
            <Label x={20.500} y={257} anchor="start" size={13} len={44}>Latitude</Label>
        </g>
        <circle cx="1523" cy="712" r="3" fill="#444" /><circle cx="1523" cy="757" r="3" fill="#444" />
    </svg>
);

const SPECK = [
    specks(110, 270, 905, 470, 960), specks(16, 530, 905, 720, 945), specks(150, 760, 965, 1100, 1040), specks(150, 1100, 985, 1500, 1060),
    specks(26, 830, 915, 1060, 940), specks(14, 1170, 920, 1280, 945), specks(16, 470, 1060, 540, 1105), specks(16, 440, 1115, 560, 1150),
].join('');

const MercatorPanel = () => (
    <svg viewBox="32 888 1511 304" preserveAspectRatio="none" className="block h-full w-full">
        {Array.from({ length: 30 }, (_, i) => <line key={i} x1="32" y1={895 + i * 10} x2="1543" y2={895 + i * 10} stroke="#1f1f1f" vectorEffect="non-scaling-stroke" />)}
        {Array.from({ length: 25 }, (_, i) => <line key={i} x1={34 + i * 62.800} y1="888" x2={34 + i * 62.800} y2="1192" stroke="#a8a8a8" vectorEffect="non-scaling-stroke" />)}
        <g transform="translate(0 860) scale(1 .47)">
            {COAST.map((d, i) => <path key={i} d={d} fill="none" stroke="#f0f0f0" strokeWidth="1.300" strokeDasharray="2.500 1.500" vectorEffect="non-scaling-stroke" />)}
        </g>
        <path d={SPECK} fill="#ececec" />
        <ellipse cx="788" cy="1045" rx="13" ry="16" fill="#000" stroke="#e8e8e8" vectorEffect="non-scaling-stroke" />
    </svg>
);

const InfoPanel = () => {
    const rows: [string, string?][] = [['Longitude'], ['Latitude'], ['Altitude'], ['Altitude (msl)'], ['TTFF'], ['Fix Mode', 'No Fix'], ['3D Acc. [m]'], ['2D Acc. [m]'], ['PDOP'], ['HDOP']];
    return (
        <div className="flex flex-col pt-[6px] pr-[6px] pl-[7px] font-['Liberation_Sans',sans-serif] text-[13px] leading-[15px] text-[#bdbdbd]">
            {rows.map(([name, val]) => (
                <div key={name} className="flex h-[15px] items-center">
                    <span className="w-[71px] flex-none tracking-[-0.45px] whitespace-nowrap">{name}</span>
                    <span className="h-[14px] flex-1 bg-[#404040] text-right text-[13px] leading-[14px] font-bold text-[#b0101c]">{val}</span>
                </div>
            ))}
            <span className="tracking-[-0.3px]">Satellites</span>
        </div>
    );
};

const Star = () => {
    const c = { x: 1703, y: 447 };
    const spikes: [number, number][] = [[0, 36], [45, 29], [90, 37], [135, 29], [180, 36], [225, 29], [270, 37], [315, 29]];
    return (
        <svg viewBox="1623 389 159 115" className="block h-full w-full">
            {spikes.map(([a, r]) => {
                const card = a % 90 === 0;
                const base = card ? 9 : 12;
                const spread = card ? 20 : 24;
                const [tx, ty] = polar(c.x, c.y, r, a);
                const [lx, ly] = polar(c.x, c.y, base, a - spread);
                const [rx, ry] = polar(c.x, c.y, base, a + spread);
                return (
                    <g key={a}>
                        <path d={`M${c.x} ${c.y}L${lx} ${ly}L${tx} ${ty}z`} fill="#d8d8d8" />
                        <path d={`M${c.x} ${c.y}L${rx} ${ry}L${tx} ${ty}z`} fill={card ? '#9a9a9a' : '#161616'} stroke="#d0d0d0" strokeWidth=".6" />
                    </g>
                );
            })}
        </svg>
    );
};

const Ring = ({ x, y }: { x: number; y: number }) => <circle cx={x} cy={y} r="5" fill="none" stroke="#d8d8d8" strokeWidth="2" />;

const SpeedGauge = () => (
    <svg viewBox="1623 531 159 113" className="block h-full w-full">
        <path d={ticks(1703, 588, 25, 29, 32, 5, 36, -135, 270)} stroke="#c8c8c8" fill="none" />
        <Ring x={1703} y={588} />
        {([['100', 1683, 550], ['150', 1723, 550], ['50', 1660, 583], ['200', 1747, 583], ['0', 1673, 618], ['250', 1733, 618]] as [string, number, number][]).map(([t, x, y]) => <Label key={t} x={x} y={y} size={14} len={t.length * 7}>{t}</Label>)}
    </svg>
);

const AltGauge = () => (
    <svg viewBox="1623 672 159 115" className="block h-full w-full">
        <path d={ticks(1703, 730, 50, 27, 33, 5, 36)} stroke="#c8c8c8" fill="none" />
        <Ring x={1703} y={730} />
        {([['0', 1703, 686], ['1', 1728, 693], ['2', 1747, 717], ['3', 1747, 744], ['4', 1728, 767], ['5', 1703, 774], ['6', 1678, 767], ['7', 1660, 744], ['8', 1660, 717], ['9', 1678, 694]] as [string, number, number][]).map(([t, x, y]) => <Label key={t} x={x} y={y} size={15} len={7}>{t}</Label>)}
    </svg>
);

const HeadingGauge = () => (
    <svg viewBox="1623 813 159 114" className="block h-full w-full">
        <path d={ticks(1703, 871, 72, 28, 32, 18, 40)} stroke="#c8c8c8" fill="none" />
        <path d="M1701 871h4M1703 869v4" stroke="#d0d0d0" />
    </svg>
);

const Cell = ({ className, children }: { className: string; children?: React.ReactNode }) => (
    <div className={`flex h-[18px] flex-none items-center gap-[4px] overflow-hidden border-t border-l border-[#b0b0b0] pl-[2px] whitespace-nowrap ${className}`}>{children}</div>
);

export default function App() {
    return (
        <div className="relative flex h-[958px] w-[1784px] flex-col overflow-hidden bg-white font-['Noto_Sans',sans-serif] text-[#1e1e1e]">
            {/* title bar */}
            <div className="flex h-[27px] flex-none items-center pb-[2px] pl-[3px]">
                <div className="flex h-[17px] w-[17px] items-center justify-center rounded-full bg-[#1a1a1a] text-[10px] font-bold text-white">P</div>
                <span className="ml-[5px] flex-1 text-[14px] tracking-[-0.2px]">COM10 - u-center 19.11.01</span>
                <div className="flex h-[24px] w-[53px] items-center justify-center"><Minus size={16} strokeWidth={1} color="#222" /></div>
                <div className="flex h-[24px] w-[53px] items-center justify-center">
                    <svg width="12" height="14" viewBox="0 0 12 14"><path d="M.5 3.500h8.500v10H.5zM3 3.500V.5h8.500v10H9" fill="none" stroke="#333" /></svg>
                </div>
                <div className="flex h-[24px] w-[53px] items-center justify-center"><X size={18} strokeWidth={1} color="#222" /></div>
            </div>
            <div className="absolute top-0 left-[1185px] flex h-[23px] w-[65px] items-center bg-[#efefef]">
                <div className="grid h-full w-[18px] grid-cols-3 gap-[2px] bg-[#d2d2d2] p-[2px]">
                    {Array.from({ length: 12 }, (_, i) => <div key={i} className="bg-[#eeeeee]" />)}
                </div>
                <svg width="16" height="16" viewBox="0 0 16 16" className="ml-[2px]"><path d="M1 6V1h5l-2 2 2 2-1 1-2-2zM15 6V1h-5l2 2-2 2 1 1 2-2zM1 10v5h5l-2-2 2-2-1-1-2 2zM15 10v5h-5l2-2-2-2 1-1 2 2z" fill="#a8a8a8" /></svg>
                <ChevronDown size={23} color="#777" strokeWidth={3} className="ml-[3px]" />
            </div>
            {/* menu */}
            <div className="flex h-[24px] flex-none items-center border-b border-[#a8a8a8] pb-[2px] text-[14px] tracking-[-0.2px]">
                <span className="ml-[8px] w-[38px]">File</span><span className="w-[39px]">Edit</span><span className="w-[45px]">View</span><span className="w-[54px]">Player</span>
                <span className="w-[68px]">Receiver</span><span className="w-[47px]">Tools</span><span className="w-[67px]">Window</span><span>Help</span>
            </div>
            {/* toolbars */}
            <TopToolbar />
            <div className="flex-none border-b border-[#8e8e8e]"><BottomToolbar /></div>
            {/* workspace */}
            <div className="flex min-h-0 flex-1 bg-[#ababab]">
                <div className="relative w-[985px] flex-none">
                    <PlotWindow />
                    <SkyWindow />
                </div>
                <div className="flex w-[632px] flex-none flex-col bg-[#f0f0f0] pr-[7px] pl-[8px]">
                    <Pane className="h-[127px]" grip="w-[602px]"><CompassSmall /></Pane>
                    <Pane className="h-[173px]" grip="w-[602px]"><SignalPanel /></Pane>
                    <Pane className="h-[110px]" grip="w-[602px]"><LevelPanel /></Pane>
                    <Pane className="h-[274px]" grip="w-[602px]"><WorldPanel /></Pane>
                    <Pane className="h-[129px]" grip="w-[602px]"><MercatorPanel /></Pane>
                </div>
                <div className="w-[2px] flex-none bg-[#d4d4d4]" />
                <div className="flex min-w-0 flex-1 flex-col bg-[#f0f0f0] pr-[2px] pl-[4px]">
                    <Pane className="h-[248px]" grip="w-[145px]"><InfoPanel /></Pane>
                    <Pane className="h-[142px]" grip="w-[145px]"><Star /></Pane>
                    <Pane className="h-[140px]" grip="w-[145px]"><SpeedGauge /></Pane>
                    <Pane className="h-[142px]" grip="w-[145px]"><AltGauge /></Pane>
                    <Pane className="h-[141px]" grip="w-[145px]"><HeadingGauge /></Pane>
                </div>
            </div>
            {/* status bar */}
            <div className="flex h-[25px] flex-none items-center border-t border-[#a0a0a0] bg-[#f0f0f0] text-[13.5px] tracking-[-0.2px]">
                <span className="ml-[2px] w-[890px] flex-none">Ready</span>
                <Cell className="w-[262px]">
                    <svg width="16" height="12" viewBox="0 0 16 12"><path d="M0 6h3M13 6h3" stroke="#222" strokeWidth="2" /><path d="M3 2h3v8H3zM10 2h3v8h-3z" fill="#fff" stroke="#222" /></svg>
                    NTRIP client: Not connected
                </Cell>
                <div className="flex w-[30px] flex-none justify-center text-[8px]">◂</div>
                <Cell className="w-[134px]">u-blox 6</Cell>
                <div className="w-[5px] flex-none" />
                <Cell className="w-[122px]">
                    <svg width="18" height="12" viewBox="0 0 18 12"><path d="M0 6h4M14 6h4" stroke="#222" strokeWidth="2" /><rect x="4" y="1.500" width="10" height="9" rx="2.500" fill="#14b024" stroke="#0a5a10" /><path d="M9 2v8" stroke="#0a5a10" /></svg>
                    COM10 9600
                </Cell>
                <div className="w-[3px] flex-none" />
                <Cell className="w-[146px]">No file open</Cell>
                <div className="w-[4px] flex-none" />
                <Cell className="w-[52px]">NMEA</Cell>
                <div className="w-[4px] flex-none" />
                <Cell className="w-[52px] text-[12.5px] tracking-[-0.6px]">00:06:09</Cell>
                <div className="w-[4px] flex-none" />
                <Cell className="w-[52px]">UTC</Cell>
                <div className="w-[4px] flex-none" />
                <Cell className="flex-1"><div className="h-[11px] w-[11px] rounded-full bg-[#22d040] shadow-[0_0_4px_#60e070]" /></Cell>
            </div>
            {/* remote-control tab docked on the screen edge */}
            <div className="absolute top-[838px] left-[1759px] h-[60px] w-[25px] rounded-tl-[6px] bg-[#7b7b7b] [clip-path:polygon(0_0,100%_0,100%_100%,60%_100%,0_70%)]">
                <div className="mt-[5px] ml-[5px] flex h-[24px] w-[20px] items-center justify-start bg-[#19508e] pl-[1px]">
                    <div className="flex h-[18px] w-[18px] items-center justify-center rounded-full bg-[#dfe8f2]">
                        <svg width="14" height="8" viewBox="0 0 14 8"><path d="M0 4l3-3v2h8V1l3 3-3 3V5H3v2z" fill="#19508e" /></svg>
                    </div>
                </div>
            </div>
        </div>
    );
}
